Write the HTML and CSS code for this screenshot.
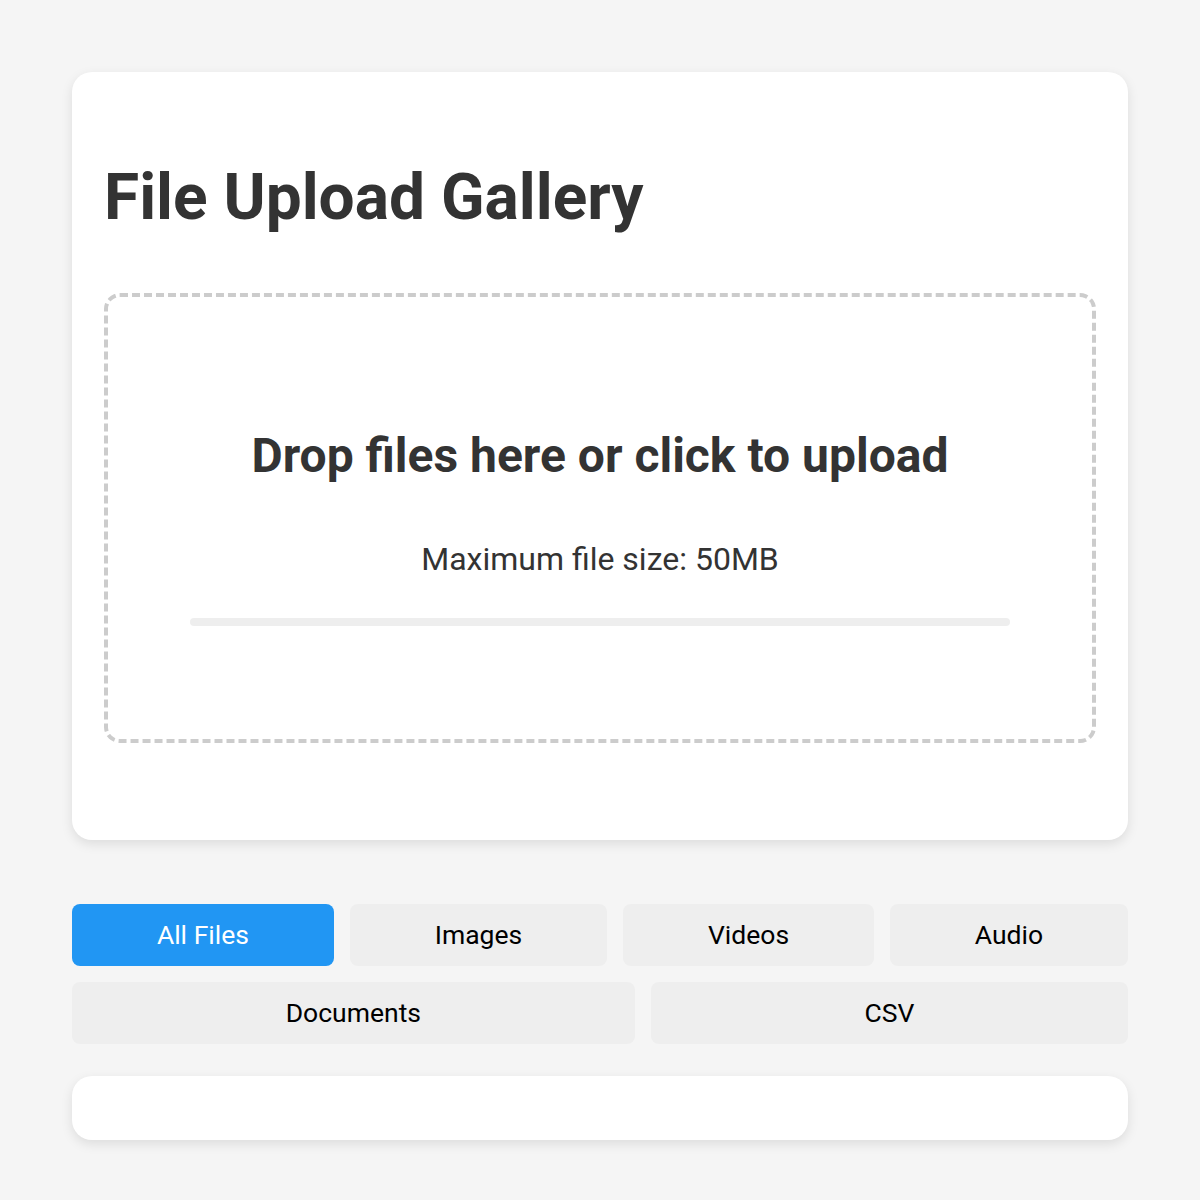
FILE: index.html
```html
<!DOCTYPE html>
<html lang="en">
<head>
  <meta charset="UTF-8">
  <meta name="viewport" content="width=device-width, initial-scale=1.0">
  <title>File Upload Gallery</title>
  <link rel="stylesheet" href="styles.css">
</head>
<body>

  <div class="container">
    <section class="upload-card">
      <h1>File Upload Gallery</h1>
      <div class="drop-zone" id="drop-zone">
        <h2>Drop files here or click to upload</h2>
        <p>Maximum file size: 50MB</p>
        <div class="progress"><div class="progress-fill" style="width: 0%"></div></div>
      </div>
    </section>

    <div class="filters">
      <button class="filter active">All Files</button>
      <button class="filter">Images</button>
      <button class="filter">Videos</button>
      <button class="filter">Audio</button>
      <button class="filter">Documents</button>
      <button class="filter">CSV</button>
    </div>

    <section class="gallery" id="gallery"></section>
  </div>

</body>
</html>
```

FILE: styles.css
```css
* { box-sizing: border-box; }

body {
  margin: 0;
  background: #f5f5f5;
  font-family: Roboto, "Liberation Sans", sans-serif;
  color: #333;
}

.container {
  padding: 72px;
}

.upload-card {
  background: white;
  border-radius: 20px;
  padding: 32px;
  box-shadow: 0 4px 12px rgba(0,0,0,0.1);
}

.upload-card h1 {
  font-size: 64px;
  font-weight: 700;
  line-height: 75px;
  margin: 56px 0 58px;
}

.drop-zone {
  border: 4px dashed #ccc;
  border-radius: 16px;
  padding: 131px 82px 113px;
  text-align: center;
  margin-bottom: 65px;
  cursor: pointer;
}

.drop-zone h2 {
  font-size: 48px;
  font-weight: 700;
  line-height: 56px;
  margin: 0 0 57px;
}

.drop-zone p {
  font-size: 32px;
  line-height: 37px;
  margin: 0 0 40px;
}

.progress {
  height: 8px;
  background: #eee;
  border-radius: 4px;
  overflow: hidden;
}
.progress-fill { height: 100%; background: #2196f3; }

.filters {
  display: flex;
  flex-wrap: wrap;
  gap: 16px;
  margin: 64px 0 32px;
}

.filter {
  flex: 1 1 auto;
  border: none;
  border-radius: 8px;
  background: #eee;
  color: #000;
  font-family: Roboto, "Liberation Sans", sans-serif;
  font-size: 26.5px;
  line-height: 30px;
  padding: 16px 79px;
  cursor: pointer;
}
.filter.active { background: #2196f3; color: white; }

.gallery {
  background: white;
  border-radius: 20px;
  padding: 32px;
  box-shadow: 0 4px 12px rgba(0,0,0,0.1);
}
```
